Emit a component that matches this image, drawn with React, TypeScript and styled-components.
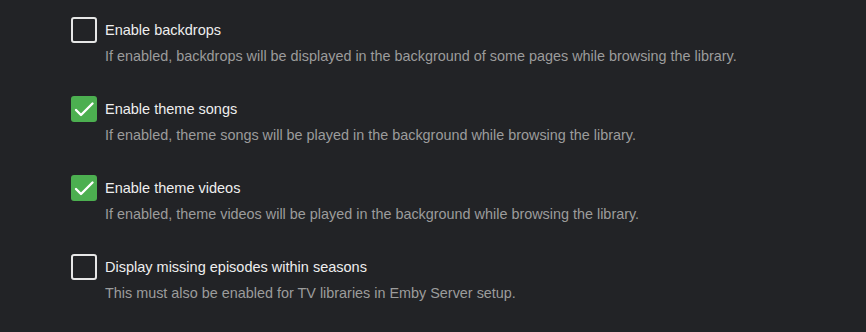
import * as React from "react";
import styled, { createGlobalStyle } from "styled-components";

const GlobalStyle = createGlobalStyle`
  html, body {
    margin: 0;
    padding: 0;
    background: #222326;
  }
  body {
    font-family: "Liberation Sans", Arial, sans-serif;
  }
`;

const Page = styled.div`
  width: 866px;
  height: 332px;
  box-sizing: border-box;
  padding: 17px 0 0 71px;
  background: #222326;
  display: flex;
  flex-direction: column;
  gap: 30px;
`;

const Option = styled.div`
  display: grid;
  grid-template-columns: 26px 1fr;
  column-gap: 8px;
  row-gap: 3px;
  align-items: center;
`;

const Box = styled.span<{ checked?: boolean }>`
  width: 26px;
  height: 26px;
  box-sizing: border-box;
  border-radius: 3px;
  display: flex;
  align-items: center;
  justify-content: center;
  border: ${({ checked }) => (checked ? "none" : "2px solid #e6e6e6")};
  background: ${({ checked }) => (checked ? "#4caf50" : "transparent")};
`;

const Label = styled.span`
  font-size: 14.5px;
  color: #eeeeee;
`;

const Description = styled.div`
  grid-column: 2;
  font-size: 14.4px;
  color: #9c9c9c;
  line-height: 20px;
`;

const Check = () => (
  <svg width="24" height="24" viewBox="0 0 24 24" fill="none">
    <path d="M4 13 L9 18 L20.5 6.5" stroke="#fff" strokeWidth="2.4" strokeLinecap="round" strokeLinejoin="round" />
  </svg>
);

const options = [
  {
    label: "Enable backdrops",
    desc: "If enabled, backdrops will be displayed in the background of some pages while browsing the library.",
    checked: false,
  },
  {
    label: "Enable theme songs",
    desc: "If enabled, theme songs will be played in the background while browsing the library.",
    checked: true,
  },
  {
    label: "Enable theme videos",
    desc: "If enabled, theme videos will be played in the background while browsing the library.",
    checked: true,
  },
  {
    label: "Display missing episodes within seasons",
    desc: "This must also be enabled for TV libraries in Emby Server setup.",
    checked: false,
  },
];

export default function App() {
  return (
    <>
      <GlobalStyle />
      <Page>
        {options.map((o, i) => (
          <Option key={i}>
            <Box checked={o.checked}>{o.checked && <Check />}</Box>
            <Label>{o.label}</Label>
            <Description>{o.desc}</Description>
          </Option>
        ))}
      </Page>
    </>
  );
}
